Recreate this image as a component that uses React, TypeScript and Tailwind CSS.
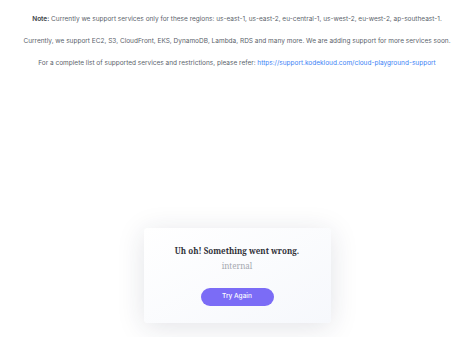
export default function App() {
    return (
        <div className="flex h-screen w-full flex-col items-center bg-white font-['Inter',sans-serif]">
            <div className="flex flex-col items-center gap-[14px] pt-[15px] text-center text-[6.5px] leading-[8px] text-[#5b5f6b]">
                <p>
                    <span className="font-semibold text-[#3a3d45]">Note:</span> Currently we support services only for these
                    regions: us-east-1, us-east-2, eu-central-1, us-west-2, eu-west-2, ap-southeast-1.
                </p>
                <p>
                    Currently, we support EC2, S3, CloudFront, EKS, DynamoDB, Lambda, RDS and many more. We are adding support for
                    more services soon.
                </p>
                <p>
                    For a complete list of supported services and restrictions, please refer:{' '}
                    <a href="#" className="text-[#3b82f6]">
                        https://support.kodekloud.com/cloud-playground-support
                    </a>
                </p>
            </div>

            <div className="flex flex-1 items-end justify-center pb-[14px]">
                <div className="flex h-[95px] w-[187px] flex-col items-center rounded-[4px] bg-gradient-to-br from-white to-[#f6f8fc] pt-[17px] shadow-[0_4px_28px_rgba(30,40,70,0.13)]">
                    <h2 className="font-['Noto_Serif','DejaVu_Serif',serif] text-[8px] font-bold leading-[12px] text-[#2f3138]">
                        Uh oh! Something went wrong.
                    </h2>
                    <p className="mt-[3px] font-['Noto_Serif','DejaVu_Serif',serif] text-[8px] leading-[12px] text-[#a5a8b0]">
                        internal
                    </p>
                    <button
                        type="button"
                        className="mt-[16px] flex h-[18px] w-[73px] items-center justify-center rounded-full bg-[#7b6cf6] text-[6.5px] font-medium text-white"
                    >
                        Try Again
                    </button>
                </div>
            </div>
        </div>
    );
}
